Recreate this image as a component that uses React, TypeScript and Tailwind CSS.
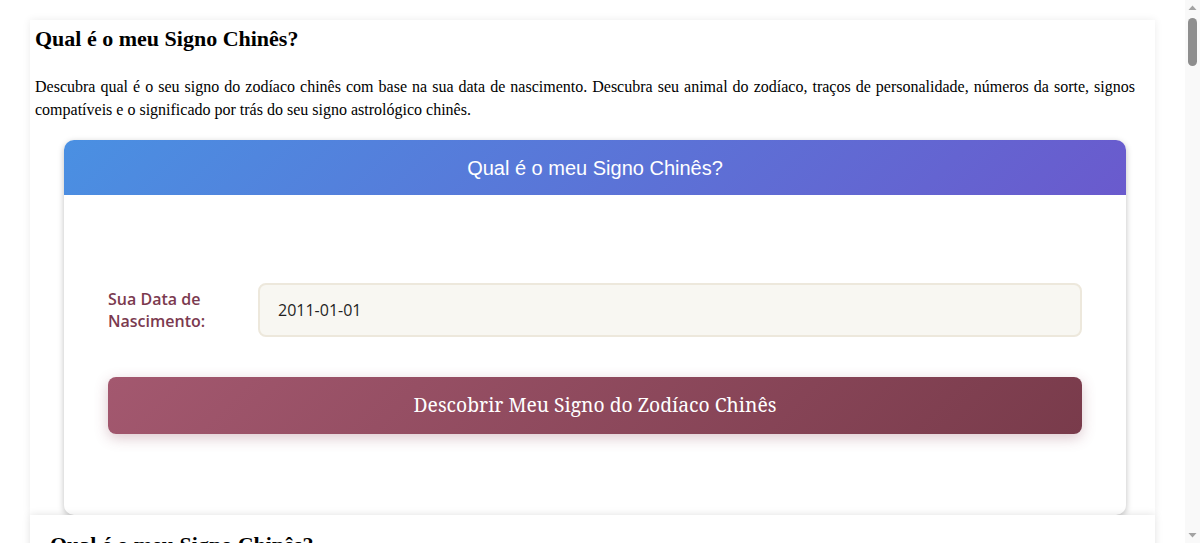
import React from "react";

function ZodiacCard() {
  return (
    <div className="ml-[29px] mt-[19px] w-[1062px] overflow-hidden rounded-[10px] bg-white shadow-[0_2px_6px_rgba(0,0,0,0.25)]">
      <div className="flex h-[55px] items-center justify-center bg-[linear-gradient(135deg,#4a90e2,#6a5acd)]">
        <h3 className="font-['Liberation_Sans',Arial,sans-serif] text-[20px] text-white">
          Qual é o meu Signo Chinês?
        </h3>
      </div>
      <div className="px-[44px] pt-[88px] pb-[81px]">
        <div className="flex items-center">
          <label className="mr-[20px] w-[130px] font-['Open_Sans',sans-serif] text-[16px] leading-[22px] font-semibold text-[#7b3a4f]">
            Sua Data de Nascimento:
          </label>
          <div className="flex h-[54px] flex-1 items-center rounded-[8px] border-2 border-[#ede8dc] bg-[#f8f7f2] px-[18px] font-['Open_Sans',sans-serif] text-[16px] text-[#1f1f1f]">
            2011-01-01
          </div>
        </div>
        <button className="mt-[40px] flex h-[57px] w-full items-center justify-center rounded-[8px] bg-[linear-gradient(135deg,#a3586f,#793b4b)] font-['Noto_Serif','DejaVu_Serif',serif] text-[19.3px] text-white shadow-[0_4px_14px_rgba(139,69,88,0.3)]">
          Descobrir Meu Signo do Zodíaco Chinês
        </button>
      </div>
    </div>
  );
}

function Scrollbar() {
  return (
    <aside className="flex h-full w-[15px] shrink-0 flex-col items-center bg-[#f9f9f9]">
      <svg width="9" height="15" viewBox="0 0 9 15" className="shrink-0">
        <path d="M0.5 10 L4.5 5.5 L8.5 10 Z" fill="#a3a3a3" />
      </svg>
      <div className="mt-[3px] h-[48px] w-[9px] rounded-full bg-[#8e8e8e]" />
      <div className="flex-1" />
      <svg width="9" height="15" viewBox="0 0 9 15" className="shrink-0">
        <path d="M0.5 5 L4.5 9.5 L8.5 5 Z" fill="#a3a3a3" />
      </svg>
    </aside>
  );
}

export default function App() {
  return (
    <div className="flex h-screen overflow-hidden bg-white font-['Liberation_Serif',serif] text-black">
      <main className="min-w-0 flex-1 overflow-hidden pt-[20px]">
        <section className="mx-[30px] bg-white pt-[5px] pr-[20px] pl-[5px] shadow-[0_0_8px_rgba(0,0,0,0.08)]">
          <h2 className="text-[22px] leading-[28px] font-bold">Qual é o meu Signo Chinês?</h2>
          <p className="mt-[22px] text-justify text-[16px] leading-[23px]">
            Descubra qual é o seu signo do zodíaco chinês com base na sua data de nascimento. Descubra seu animal do
            zodíaco, traços de personalidade, números da sorte, signos compatíveis e o significado por trás do seu signo
            astrológico chinês.
          </p>
          <ZodiacCard />
        </section>
        <section className="mx-[30px] min-h-[800px] bg-white px-[20px] pt-[16px] shadow-[0_0_8px_rgba(0,0,0,0.12)]">
          <h2 className="text-[22px] leading-[28px] font-bold">Qual é o meu Signo Chinês?</h2>
          <p className="mt-[16px] text-[16px] leading-[23px]">
            O zodíaco chinês é um ciclo de doze anos, e cada ano é representado por um animal com características
            próprias.
          </p>
        </section>
      </main>
      <Scrollbar />
    </div>
  );
}
